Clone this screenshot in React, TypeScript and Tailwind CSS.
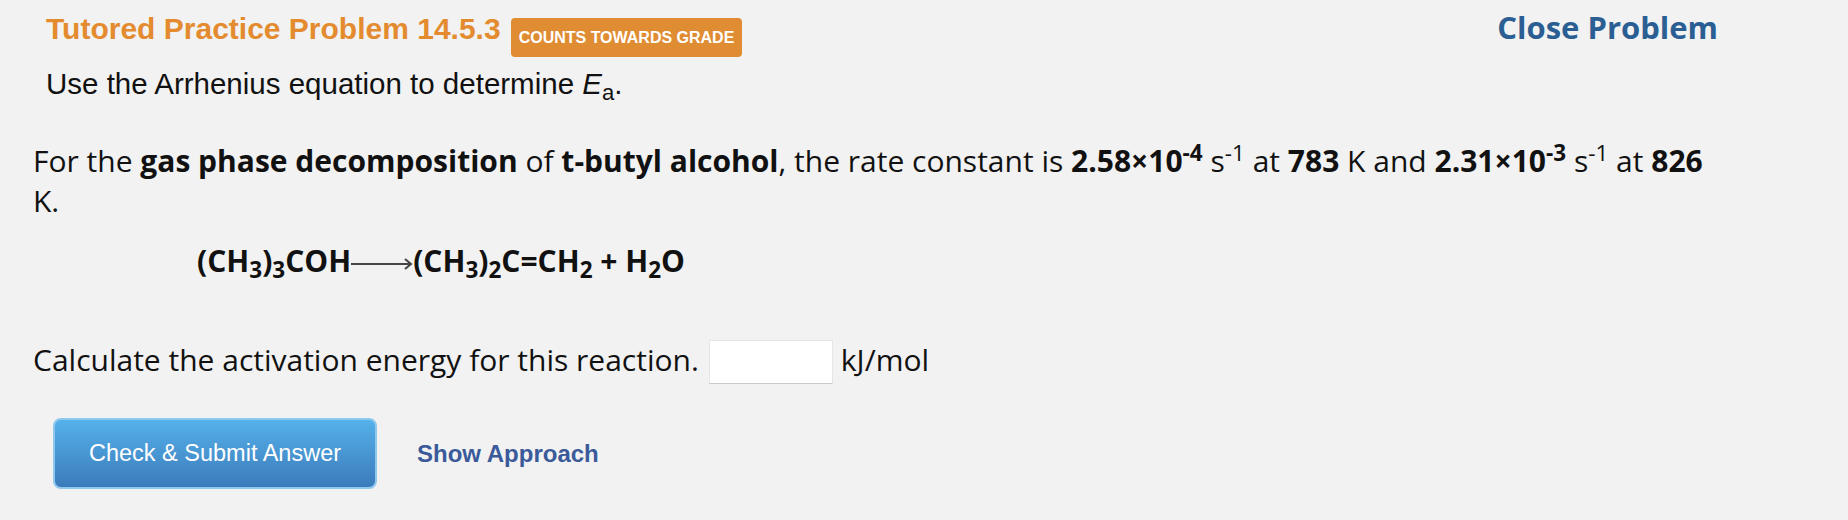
export default function App() {
  return (
    <div className="w-full h-[520px] overflow-hidden bg-[#f2f2f2] text-[#111]">
      {/* header */}
      <div className="flex items-start justify-between pt-[6px] pl-[46px] pr-[130px]">
        <div className="flex items-start">
          <h1 className="mt-[4px] font-['Liberation_Sans',Arial,sans-serif] text-[30px] leading-[38px] font-bold text-[#e38b2e]">
            Tutored Practice Problem 14.5.3
          </h1>
          <span className="mt-[12px] ml-[10px] flex h-[39px] items-center rounded-[4px] bg-[#e08c33] px-[8px] font-['Liberation_Sans',Arial,sans-serif] text-[16px] font-bold text-white">
            COUNTS TOWARDS GRADE
          </span>
        </div>
        <a className="font-['Open_Sans',sans-serif] text-[31px] leading-[43px] font-bold text-[#2b5f93]">
          Close Problem
        </a>
      </div>

      <p className="mt-[10px] pl-[46px] font-['Liberation_Sans',Arial,sans-serif] text-[29.5px] leading-[34px]">
        Use the Arrhenius equation to determine <i>E</i>
        <sub>a</sub>.
      </p>

      <div className="pl-[33px] pr-[130px] font-['Open_Sans',sans-serif] text-[30px] leading-[40px]">
        <p className="mt-[40px]">
          For the <b>gas phase decomposition</b> of <b>t-butyl alcohol</b>, the rate constant is{' '}
          <b>
            2.58×10<sup>-4</sup>
          </b>{' '}
          s<sup>-1</sup> at <b>783</b> K and{' '}
          <b>
            2.31×10<sup>-3</sup>
          </b>{' '}
          s<sup>-1</sup> at <b>826</b> K.
        </p>

        <p className="mt-[20px] pl-[164px] font-bold">
          (CH<sub>3</sub>)<sub>3</sub>COH
          <svg width="62" height="16" viewBox="0 0 62 16" className="inline-block align-baseline">
            <line x1="0" y1="8" x2="60" y2="8" stroke="#444" strokeWidth="2" />
            <polyline points="54,3 60,8 54,13" fill="none" stroke="#444" strokeWidth="2" />
          </svg>
          (CH<sub>3</sub>)<sub>2</sub>C=CH<sub>2</sub> + H<sub>2</sub>O
        </p>

        <div className="mt-[59px] flex items-start">
          <span>Calculate the activation energy for this reaction.</span>
          <input
            type="text"
            className="ml-[10px] h-[44px] w-[124px] border border-[#e6e6e6] border-b-[#c9c9c9] bg-white outline-none"
          />
          <span className="ml-[8px]">kJ/mol</span>
        </div>
      </div>

      <div className="mt-[34px] flex items-center pl-[53px]">
        <button className="h-[71px] w-[324px] rounded-[8px] border-2 border-[#8ec8ee] bg-gradient-to-b from-[#55b1ea] to-[#3c7bbb] font-['Liberation_Sans',Arial,sans-serif] text-[23.5px] text-white">
          Check &amp; Submit Answer
        </button>
        <a className="ml-[40px] font-['Liberation_Sans',Arial,sans-serif] text-[24px] font-bold text-[#3a5a9a]">
          Show Approach
        </a>
      </div>
    </div>
  );
}
